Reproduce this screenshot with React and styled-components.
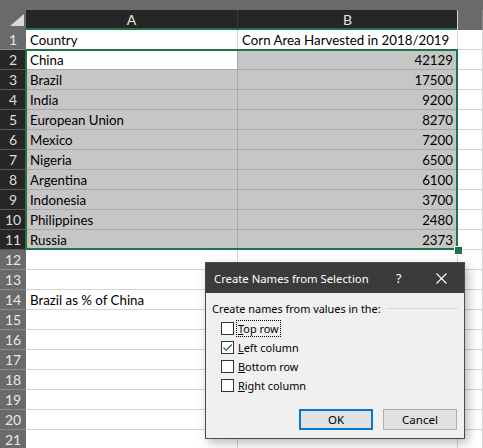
import React from 'react'
import styled, { createGlobalStyle } from 'styled-components'

const GlobalStyle = createGlobalStyle`
  html, body {
    margin: 0;
    padding: 0;
    background: #ffffff;
  }
`

const rows = [
  ['Country', 'Corn Area Harvested in 2018/2019'],
  ['China', '42129'],
  ['Brazil', '17500'],
  ['India', '9200'],
  ['European Union', '8270'],
  ['Mexico', '7200'],
  ['Nigeria', '6500'],
  ['Argentina', '6100'],
  ['Indonesia', '3700'],
  ['Philippines', '2480'],
  ['Russia', '2373'],
  ['', ''],
  ['', ''],
  ['Brazil as % of China', ''],
  ['', ''],
  ['', ''],
  ['', ''],
  ['', ''],
  ['', ''],
  ['', ''],
  ['', '']
]

const options = [
  { key: 'T', rest: 'op row', checked: false, focus: true },
  { key: 'L', rest: 'eft column', checked: true },
  { key: 'B', rest: 'ottom row', checked: false },
  { key: 'R', rest: 'ight column', checked: false }
]

const App = () => {
  return (
    <>
      <GlobalStyle />
      <Screen>
        <TopStrip />
        <Sheet>
          <HeaderRow>
            <Corner>
              <svg width='14' height='12' viewBox='0 0 14 12'>
                <polygon points='14,0 14,12 0,12' fill='#dadada' />
              </svg>
            </Corner>
            <ColHeader $w={212} $selected>A</ColHeader>
            <ColHeader $w={220} $selected>B</ColHeader>
            <ColHeader $rest />
          </HeaderRow>
          {rows.map(([a, b], i) => {
            const n = i + 1
            const inSel = n >= 2 && n <= 11
            return (
              <Row key={n}>
                <RowHeader $selected={inSel}>{n}</RowHeader>
                <Cell $w={212} $shaded={inSel && n !== 2} $sel={inSel}>
                  {a}
                </Cell>
                <Cell $w={220} $shaded={inSel} $sel={inSel} $right={n > 1}>
                  {b}
                </Cell>
                <Cell $rest />
              </Row>
            )
          })}
          <Selection />
          <FillHandle />
        </Sheet>

        <Dialog>
          <TitleBar>
            <Title>Create Names from Selection</Title>
            <Help>?</Help>
            <Close>
              <svg width='11' height='11' viewBox='0 0 11 11'>
                <path
                  d='M0.5 0.5 L10.5 10.5 M10.5 0.5 L0.5 10.5'
                  stroke='#ffffff'
                  strokeWidth='1.1'
                />
              </svg>
            </Close>
          </TitleBar>
          <Body>
            <GroupHead>
              <span>Create names from values in the:</span>
              <GroupLine />
            </GroupHead>
            <OptionList>
              {options.map((o) => (
                <Option key={o.key}>
                  <Box>
                    {o.checked && (
                      <svg width='11' height='11' viewBox='0 0 11 11'>
                        <path
                          d='M1.5 5.5 L4.2 8.2 L9.8 2.5'
                          fill='none'
                          stroke='#4a4a4a'
                          strokeWidth='1.1'
                        />
                      </svg>
                    )}
                  </Box>
                  <Label $focus={o.focus}>
                    <u>{o.key}</u>
                    {o.rest}
                  </Label>
                </Option>
              ))}
            </OptionList>
            <Buttons>
              <Button $primary>OK</Button>
              <Button>Cancel</Button>
            </Buttons>
          </Body>
        </Dialog>
      </Screen>
    </>
  )
}

const Screen = styled.div`
  position: relative;
  width: 483px;
  height: 448px;
  overflow: hidden;
  background: #ffffff;
`

const TopStrip = styled.div`
  height: 10px;
  background: #6a6a6a;
`

const Sheet = styled.div`
  position: relative;
  display: flex;
  flex-direction: column;
  font-family: Lato, 'Liberation Sans', sans-serif;
  font-size: 13.3px;
  color: #000000;
`

const HeaderRow = styled.div`
  display: flex;
  height: 20px;
`

const Corner = styled.div`
  width: 26px;
  flex: none;
  background: #6a6a6a;
  display: flex;
  align-items: flex-end;
  justify-content: flex-end;
  padding: 0 2px 4px 0;
  box-sizing: border-box;
`

const ColHeader = styled.div`
  flex: ${({ $rest }) => ($rest ? '1' : 'none')};
  width: ${({ $w }) => ($w ? $w + 'px' : 'auto')};
  box-sizing: border-box;
  background: ${({ $selected }) => ($selected ? '#262626' : '#6a6a6a')};
  color: #e6e6e6;
  display: flex;
  align-items: center;
  justify-content: center;
  padding-bottom: 2px;
  border-right: 1px solid
    ${({ $selected }) => ($selected ? '#3a3a3a' : '#8a8a8a')};
  box-shadow: ${({ $selected }) =>
    $selected ? 'inset 0 -2px 0 #217346' : 'none'};
  font-size: 14px;
  &:nth-child(3) {
    border-right-color: #d4d4d4;
  }
`

const Row = styled.div`
  display: flex;
  height: 20px;
`

const RowHeader = styled.div`
  width: 26px;
  flex: none;
  box-sizing: border-box;
  background: ${({ $selected }) => ($selected ? '#262626' : '#6a6a6a')};
  color: ${({ $selected }) => ($selected ? '#dcdcdc' : '#e8e8e8')};
  border-bottom: 1px solid
    ${({ $selected }) => ($selected ? '#5a5a5a' : '#8c8c8c')};
  display: flex;
  align-items: center;
  justify-content: center;
  font-size: 14px;
`

const Cell = styled.div`
  flex: ${({ $rest }) => ($rest ? '1' : 'none')};
  width: ${({ $w }) => ($w ? $w + 'px' : 'auto')};
  box-sizing: border-box;
  background: ${({ $shaded }) => ($shaded ? '#c6c6c6' : '#ffffff')};
  border-right: 1px solid ${({ $sel }) => ($sel ? '#a8a8a8' : '#d4d4d4')};
  border-bottom: 1px solid ${({ $sel }) => ($sel ? '#a8a8a8' : '#d4d4d4')};
  display: flex;
  align-items: center;
  justify-content: ${({ $right }) => ($right ? 'flex-end' : 'flex-start')};
  padding: 0 4px 0 4px;
  white-space: nowrap;
  overflow: visible;
`

const Selection = styled.div`
  position: absolute;
  left: 25px;
  top: 39px;
  width: 433px;
  height: 201px;
  border: 2px solid #217346;
  box-sizing: border-box;
  pointer-events: none;
`

const FillHandle = styled.div`
  position: absolute;
  left: 454px;
  top: 236px;
  width: 7px;
  height: 7px;
  background: #217346;
  border: 1px solid #ffffff;
`

const Dialog = styled.div`
  position: absolute;
  left: 205px;
  top: 262px;
  width: 260px;
  height: 177px;
  box-sizing: border-box;
  border: 1px solid #4a4a4a;
  background: #f0f0f0;
  display: flex;
  flex-direction: column;
  box-shadow: 3px 4px 10px rgba(0, 0, 0, 0.28);
  font-family: 'Noto Sans', 'Open Sans', sans-serif;
  font-size: 10.9px;
  color: #000000;
`

const TitleBar = styled.div`
  height: 30px;
  flex: none;
  background: #3b3b3b;
  color: #ffffff;
  display: flex;
  align-items: center;
  padding-left: 8px;
`

const Title = styled.span`
  flex: 1;
  font-size: 11.3px;
`

const Help = styled.span`
  width: 20px;
  font-size: 12.5px;
  margin-right: 20px;
`

const Close = styled.span`
  width: 28px;
  display: flex;
  align-items: center;
  justify-content: flex-start;
`

const Body = styled.div`
  flex: 1;
  display: flex;
  flex-direction: column;
  padding: 7px 6px 8px 6px;
`

const GroupHead = styled.div`
  display: flex;
  align-items: center;
  height: 16px;
`

const GroupLine = styled.div`
  flex: 1;
  height: 1px;
  background: #d9d9d9;
  margin-left: 5px;
`

const OptionList = styled.div`
  display: flex;
  flex-direction: column;
  gap: 4px;
  margin: 5px 0 0 9px;
`

const Option = styled.div`
  display: flex;
  align-items: center;
  height: 15px;
`

const Box = styled.div`
  width: 13px;
  height: 13px;
  box-sizing: border-box;
  border: 1px solid #333333;
  background: #ffffff;
  display: flex;
  align-items: center;
  justify-content: center;
  margin-right: 3px;
`

const Label = styled.span`
  padding: 0 1px;
  outline: ${({ $focus }) => ($focus ? '1px dotted #000000' : 'none')};
  line-height: 15px;
`

const Buttons = styled.div`
  margin-top: auto;
  display: flex;
  justify-content: flex-end;
  gap: 10px;
  padding-right: 1px;
`

const Button = styled.div`
  width: 74px;
  height: 21px;
  box-sizing: border-box;
  background: #e1e1e1;
  border: ${({ $primary }) =>
    $primary ? '2px solid #0078d7' : '1px solid #adadad'};
  display: flex;
  align-items: center;
  justify-content: center;
  font-size: 11.5px;
`

export default App
